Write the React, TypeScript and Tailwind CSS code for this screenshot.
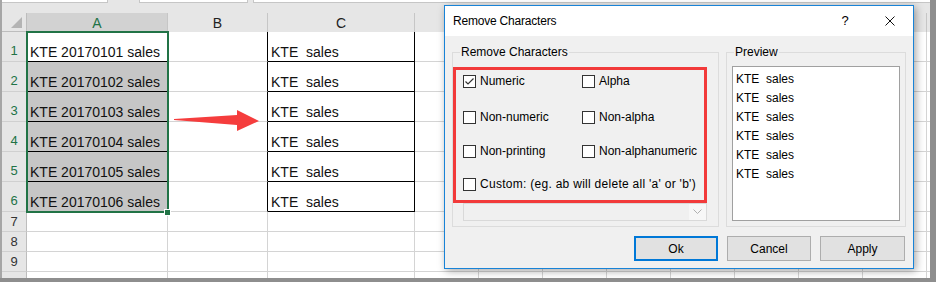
import React from 'react';

const rows = [
  { n: 1, a: 'KTE 20170101 sales', c: 'KTE  sales' },
  { n: 2, a: 'KTE 20170102 sales', c: 'KTE  sales' },
  { n: 3, a: 'KTE 20170103 sales', c: 'KTE  sales' },
  { n: 4, a: 'KTE 20170104 sales', c: 'KTE  sales' },
  { n: 5, a: 'KTE 20170105 sales', c: 'KTE  sales' },
  { n: 6, a: 'KTE 20170106 sales', c: 'KTE  sales' },
  { n: 7 },
  { n: 8 },
  { n: 9 },
  { n: 10 },
];

const extraCols = [0, 1, 2, 3, 4, 5, 6, 7, 8];

const Checkbox: React.FC<{ checked?: boolean; label: string; wide?: boolean }> = ({ checked, label, wide }) => (
  <div className="flex items-center gap-[4px]">
    <span className="w-[13px] h-[13px] border border-[#333] bg-white flex items-center justify-center">
      {checked && (
        <svg width="11" height="11" viewBox="0 0 11 11">
          <polyline points="1.5,5.5 4,8 9.5,2.5" fill="none" stroke="#333" strokeWidth="1.2" />
        </svg>
      )}
    </span>
    <span className={`whitespace-nowrap ${wide ? 'tracking-[0.28px]' : ''}`}>{label}</span>
  </div>
);

const Sheet: React.FC = () => (
  <div className="relative grid grid-cols-[25px_141px_100px_147px_repeat(9,64px)] grid-rows-[19px_repeat(6,30px)_repeat(4,20px)] text-[14px] leading-[16px] text-[#111]">
    {/* header row */}
    <div className="bg-[#e6e6e6] border-r border-b border-[#bdbdbd] flex items-end justify-end pr-[3px] pb-[3px]">
      <svg width="12" height="11" viewBox="0 0 12 11">
        <polygon points="11,0 11,11 0,11" fill="#b4b4b4" />
      </svg>
    </div>
    <div className="bg-[#d2d2d2] border-r border-[#c6c6c6] flex items-center justify-center text-[#217346]">A</div>
    <div className="bg-[#e6e6e6] border-r border-[#c6c6c6] flex items-center justify-center text-[#222]">B</div>
    <div className="bg-[#e6e6e6] border-r border-[#c6c6c6] flex items-center justify-center text-[#222]">C</div>
    {extraCols.map((i) => (
      <div key={`h${i}`} className="bg-[#e6e6e6] border-r border-[#c6c6c6]" />
    ))}

    {rows.map((r) => {
      const data = !!r.a;
      return (
        <React.Fragment key={r.n}>
          <div
            className={`bg-[#e6e6e6] border-r border-b border-r-[#bdbdbd] border-b-[#d0d0d0] flex justify-center text-[13px] leading-[15px] ${
              data ? 'items-end pb-[3px] text-[#217346]' : 'items-center text-[#333]'
            }`}
          >
            {r.n < 10 ? r.n : null}
          </div>
          <div
            className={`border-r border-b flex items-end px-[3px] pb-[1px] whitespace-pre ${
              data
                ? `border-r-[#d4d4d4] border-b-black ${r.n === 1 ? 'bg-white' : 'bg-[#c6c6c6]'}`
                : 'border-[#d4d4d4]'
            }`}
          >
            {r.a}
          </div>
          <div className={`border-r border-b border-b-[#d4d4d4] ${data ? 'border-r-black' : 'border-r-[#d4d4d4]'}`} />
          <div
            className={`border-r border-b flex items-end pl-[3px] pb-[1px] whitespace-pre ${
              data ? 'border-black' : 'border-[#d4d4d4]'
            }`}
          >
            {r.c}
          </div>
          {extraCols.map((i) => (
            <div key={`c${r.n}-${i}`} className="border-r border-b border-[#d4d4d4]" />
          ))}
        </React.Fragment>
      );
    })}

    {/* selection A1:A6 */}
    <div className="absolute left-[24px] top-[18px] w-[143px] h-[182px] border-2 border-[#217346]" />
    <div className="absolute left-[162px] top-[196px] w-[7px] h-[7px] bg-[#217346] border border-white" />
  </div>
);

const Dialog: React.FC = () => (
  <div className="absolute left-[444px] top-[5px] w-[470px] h-[264px] border border-[#1883d7] bg-[#f0f0f0] shadow-[2px_2px_8px_rgba(0,0,0,0.35)] flex flex-col text-[12px] text-black">
    {/* title bar */}
    <div className="h-[30px] bg-white flex items-center pl-[8px] pr-[18px]">
      <span className="flex-1 tracking-[-0.2px]">Remove Characters</span>
      <span className="w-[12px] text-center text-[13px]">?</span>
      <svg className="ml-[34px]" width="10" height="10" viewBox="0 0 10 10">
        <path d="M0.5 0.5 L9.5 9.5 M9.5 0.5 L0.5 9.5" stroke="#111" strokeWidth="1" />
      </svg>
    </div>

    <div className="flex-1 px-[7px]">
      <div className="flex gap-[7px] mt-[9px]">
        <fieldset className="w-[267px] h-[182px] border border-[#dcdcdc] flex flex-col">
          <legend className="ml-[7px] px-[1px] leading-[14px]">Remove Characters</legend>
          <div className="mt-[8px] w-[254px] h-[136px] border-[3px] border-[#f23a3a] pl-[7px] pt-[3px] flex flex-col">
            <div className="flex h-[16px] items-center">
              <div className="w-[119px]"><Checkbox checked label="Numeric" /></div>
              <Checkbox label="Alpha" />
            </div>
            <div className="flex h-[16px] items-center mt-[20px]">
              <div className="w-[119px]"><Checkbox label="Non-numeric" /></div>
              <Checkbox label="Non-alpha" />
            </div>
            <div className="flex h-[16px] items-center mt-[18px]">
              <div className="w-[119px]"><Checkbox label="Non-printing" /></div>
              <Checkbox label="Non-alphanumeric" />
            </div>
            <div className="flex h-[16px] items-center mt-[17px]">
              <Checkbox wide label="Custom: (eg. ab will delete all 'a' or 'b')" />
            </div>
          </div>
          <div className="ml-[10px] w-[244px] h-[18px] border border-[#d9d9d9] bg-[#f0f0f0] flex justify-end">
            <div className="w-[17px] h-full bg-[#f7f7f7] flex items-center justify-center">
              <svg width="9" height="6" viewBox="0 0 9 6">
                <polyline points="0.5,0.5 4.5,4.5 8.5,0.5" fill="none" stroke="#b0b0b0" strokeWidth="1" />
              </svg>
            </div>
          </div>
        </fieldset>

        <fieldset className="w-[180px] h-[182px] border border-[#dcdcdc] flex flex-col">
          <legend className="ml-[7px] px-[1px] leading-[14px]">Preview</legend>
          <div className="mt-[7px] mx-[5px] h-[155px] border border-[#a0a0a0] bg-white pl-[3px] pt-[3px] leading-[19px]">
            {rows.slice(0, 6).map((r) => (
              <div key={r.n} className="whitespace-pre">KTE  sales</div>
            ))}
          </div>
        </fieldset>
      </div>

      <div className="flex justify-end gap-[9px] mt-[9px] pr-[1px]">
        <button className="w-[84px] h-[25px] bg-[#e1e1e1] border-2 border-[#0078d7]">Ok</button>
        <button className="w-[84px] h-[25px] bg-[#e1e1e1] border border-[#adadad]">Cancel</button>
        <button className="w-[85px] h-[25px] bg-[#e1e1e1] border border-[#adadad]">Apply</button>
      </div>
    </div>
  </div>
);

export default function App() {
  return (
    <div className="relative w-[936px] h-[282px] overflow-hidden bg-[#8e8e8e] font-['Liberation_Sans',Arial,sans-serif]">
      <div className="w-[930px] h-[278px] bg-white border-l-2 border-[#a6a6a6] overflow-hidden flex flex-col">
        {/* toolbar strip */}
        <div className="h-[13px] shrink-0 bg-[#e6e6e6] flex">
          <div className="w-[106px] h-[3px] bg-white border-r border-b border-[#c6c6c6]" />
          <div className="ml-[31px] w-[109px] h-[3px] bg-white border-x border-b border-[#c6c6c6]" />
          <div className="ml-[5px] flex-1 h-[3px] bg-white border-l border-b border-[#c6c6c6]" />
        </div>
        <Sheet />
      </div>

      {/* arrow */}
      <svg className="absolute left-[170px] top-[105px]" width="95" height="30" viewBox="0 0 95 30">
        <polygon points="4,14 67,10 67,5 89,16 67,26 67,20 4,15" fill="#f53d3d" />
      </svg>

      <Dialog />
    </div>
  );
}
